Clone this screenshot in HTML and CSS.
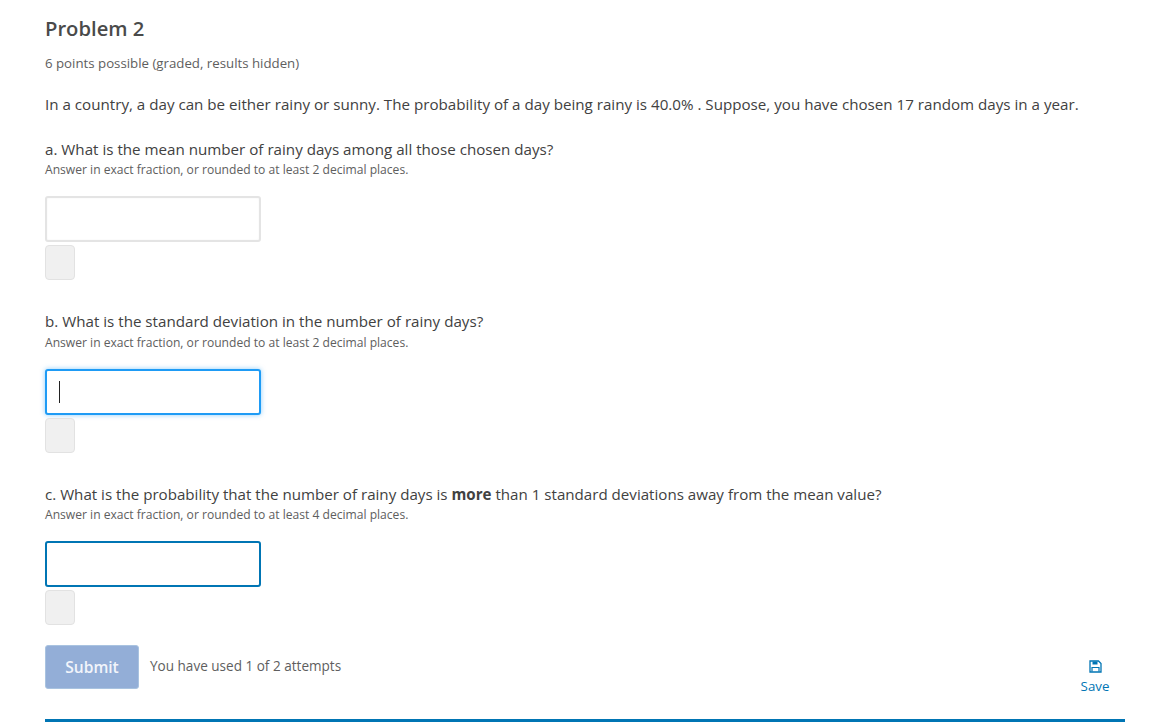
FILE: index.html
```html
<!DOCTYPE html>
<html lang="en">
<head>
  <meta charset="UTF-8" />
  <title>Problem 2</title>
  <link rel="stylesheet" href="styles.css">
</head>
<body>
  <main class="problem">
    <h2 class="problem-title">Problem 2</h2>
    <p class="points">6 points possible (graded, results hidden)</p>
    <p class="intro">In a country, a day can be either rainy or sunny. The probability of a day being rainy is 40.0% . Suppose, you have chosen 17 random days in a year.</p>

    <section class="question question-a">
      <p class="question-text">a. What is the mean number of rainy days among all those chosen days?</p>
      <p class="hint">Answer in exact fraction, or rounded to at least 2 decimal places.</p>
      <div class="answer-input"></div>
      <div class="status-box"></div>
    </section>

    <section class="question question-b">
      <p class="question-text">b. What is the standard deviation in the number of rainy days?</p>
      <p class="hint">Answer in exact fraction, or rounded to at least 2 decimal places.</p>
      <div class="answer-input focused"><span class="caret"></span></div>
      <div class="status-box"></div>
    </section>

    <section class="question question-c">
      <p class="question-text">c. What is the probability that the number of rainy days is <b>more</b> than 1 standard deviations away from the mean value?</p>
      <p class="hint">Answer in exact fraction, or rounded to at least 4 decimal places.</p>
      <div class="answer-input selected"></div>
      <div class="status-box"></div>
    </section>

    <div class="actions">
      <button class="submit-btn" type="button">Submit</button>
      <span class="attempts">You have used 1 of 2 attempts</span>
      <div class="save">
        <svg class="save-icon" width="13" height="13" viewBox="0 0 13 13" fill="none">
          <path d="M1 1h8.500l2.500 2.500v8.500h-11z" stroke="#0075b4" stroke-width="1.300"/>
          <path d="M3.500 1.500h5v3h-5z" fill="#0075b4"/>
          <path d="M3 11.500v-4h7v4" stroke="#0075b4" stroke-width="1.200"/>
        </svg>
        <span class="save-label">Save</span>
      </div>
    </div>
  </main>
</body>
</html>
```

FILE: styles.css
```css
body {
  margin: 0;
  background: #fff;
  font-family: "Open Sans", sans-serif;
  color: #414141;
}
p {
  margin: 0;
}
.problem {
  width: 1080px;
  height: 703px;
  margin-left: 45px;
  padding-top: 16px;
  border-bottom: 3px solid #0075b4;
}
.problem-title {
  margin: 0;
  font-size: 20.2px;
  font-weight: 600;
  line-height: 24px;
  color: #4a4a4a;
}
.points {
  margin-top: 14px;
  font-size: 13.26px;
  line-height: 18px;
  color: #5e5e5e;
}
.intro {
  margin-top: 21px;
  font-size: 15.16px;
  line-height: 22px;
  white-space: nowrap;
}
.question {
  margin-top: 23px;
}
.question-b,
.question-c {
  margin-top: 30px;
}
.question-text {
  font-size: 15.16px;
  line-height: 22px;
}
.question-c .question-text {
  font-size: 15.13px;
}
.hint {
  margin-top: 1px;
  font-size: 12.1px;
  line-height: 17px;
  color: #5e5e5e;
}
.question-b .hint {
  margin-top: 2px;
}
.answer-input {
  box-sizing: border-box;
  width: 216px;
  height: 46px;
  margin-top: 18px;
  padding: 10px 12px;
  border: 2px solid #e4e4e4;
  border-radius: 3px;
  background: #fff;
  box-shadow: inset 0 0 2px rgba(0, 0, 0, 0.06);
}
.answer-input.focused {
  border-color: #1e9bf5;
  box-shadow: 0 0 5px rgba(30, 155, 245, 0.5);
}
.answer-input.selected {
  border-color: #0075b4;
  box-shadow: none;
}
.caret {
  display: block;
  width: 1px;
  height: 22px;
  background: #222;
}
.status-box {
  box-sizing: border-box;
  width: 30px;
  height: 35px;
  margin-top: 3px;
  border: 1px solid #e2e2e2;
  border-radius: 4px;
  background: #f0f0f0;
}
.actions {
  display: flex;
  align-items: flex-start;
  margin-top: 20px;
}
.submit-btn {
  width: 94px;
  height: 44px;
  padding: 0;
  border: 1px solid #a9c3e0;
  border-radius: 3px;
  background: #93aed7;
  color: #f2f5fb;
  font-family: inherit;
  font-size: 15.6px;
  font-weight: 600;
}
.attempts {
  margin-left: 11px;
  font-size: 13.55px;
  line-height: 42px;
  color: #5e5e5e;
}
.save {
  display: flex;
  flex-direction: column;
  align-items: center;
  width: 60px;
  margin-left: auto;
  padding-top: 15px;
}
.save-label {
  margin-top: 4px;
  font-size: 13.3px;
  line-height: 18px;
  color: #0075b4;
}
```
